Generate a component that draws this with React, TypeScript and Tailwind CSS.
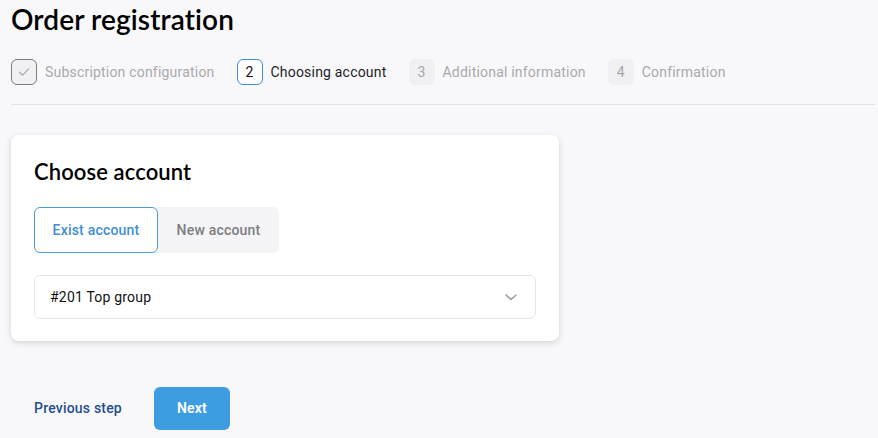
import React, { useState } from 'react';

const body = { fontFamily: 'Roboto, "Noto Sans", Arial, sans-serif', letterSpacing: '0.2px' };
const head = { fontFamily: 'Lato, "Open Sans", Arial, sans-serif', letterSpacing: '0.1px' };

const steps = [
  { n: 1, label: 'Subscription configuration', state: 'done' },
  { n: 2, label: 'Choosing account', state: 'active' },
  { n: 3, label: 'Additional information', state: 'todo' },
  { n: 4, label: 'Confirmation', state: 'todo' },
];

const Stepper = () => (
  <div className="flex items-center gap-[22px]">
    {steps.map((s) => (
      <div key={s.n} className="flex items-center gap-2">
        {s.state === 'done' && (
          <span className="flex h-[26px] w-[26px] items-center justify-center rounded-md border border-[#7a7a7e] bg-[#f1f1f3]">
            <svg width="14" height="14" viewBox="0 0 14 14" fill="none">
              <path d="M2.5 7.2 5.6 10.2 11.5 3.8" stroke="#a9a9ad" strokeWidth="1.2" strokeLinecap="round" strokeLinejoin="round" />
            </svg>
          </span>
        )}
        {s.state === 'active' && (
          <span className="flex h-[26px] w-[26px] items-center justify-center rounded-md border border-[#3e8fd6] bg-white text-[14px] text-[#111]">
            {s.n}
          </span>
        )}
        {s.state === 'todo' && (
          <span className="flex h-[26px] w-[26px] items-center justify-center rounded-md bg-[#f0f0f2] text-[14px] text-[#a6a6aa]">
            {s.n}
          </span>
        )}
        <span className={`text-[14px] ${s.state === 'active' ? 'text-[#1d1d1f]' : 'text-[#a9a9ad]'}`}>{s.label}</span>
      </div>
    ))}
  </div>
);

export default function App() {
  const [tab, setTab] = useState<'exist' | 'new'>('exist');

  return (
    <div className="min-h-[438px] bg-[#f8f8fa] pl-[11px] pr-[3px] pt-[3px]" style={body}>
      <h1 className="text-[28px] font-semibold leading-[32px] text-black" style={head}>
        Order registration
      </h1>

      <div className="mt-[24px] pb-[19px] border-b border-[#e2e2e5]">
        <Stepper />
      </div>

      <div className="mt-[30px] w-[548px] rounded-lg bg-white px-[23px] pt-[23px] pb-[22px] shadow-[0_2px_6px_rgba(0,0,0,0.15)]">
        <h2 className="text-[22px] font-semibold leading-[28px] text-black" style={head}>
          Choose account
        </h2>

        <div className="mt-[21px] flex w-[245px] rounded-md bg-[#f4f4f6]">
          <button
            onClick={() => setTab('exist')}
            className={`h-[46px] w-[124px] rounded-md text-[14px] font-medium ${
              tab === 'exist' ? 'border border-[#4a9be0] bg-white text-[#3f8fd2]' : 'text-[#7d7d82]'
            }`}
          >
            Exist account
          </button>
          <button
            onClick={() => setTab('new')}
            className={`h-[46px] w-[121px] rounded-md text-[14px] font-medium ${
              tab === 'new' ? 'border border-[#4a9be0] bg-white text-[#3f8fd2]' : 'text-[#7d7d82]'
            }`}
          >
            New account
          </button>
        </div>

        <div className="mt-[22px] flex h-[44px] items-center justify-between rounded-md border border-[#e6e6e9] pl-[15px] pr-[17px]">
          <span className="text-[14px] text-[#111]">#201 Top group</span>
          <svg width="14" height="14" viewBox="0 0 14 14" fill="none">
            <path d="M2 5l5 4.5L12 5" stroke="#9a9a9e" strokeWidth="1.5" strokeLinecap="round" strokeLinejoin="round" />
          </svg>
        </div>
      </div>

      <div className="mt-[46px] flex items-center gap-[32px] pl-[23px]">
        <button className="text-[14px] font-medium text-[#1f4f8f]">Previous step</button>
        <button className="h-[43px] w-[76px] rounded-md bg-[#3e9de0] text-[14px] font-semibold text-white">
          Next
        </button>
      </div>
    </div>
  );
}
